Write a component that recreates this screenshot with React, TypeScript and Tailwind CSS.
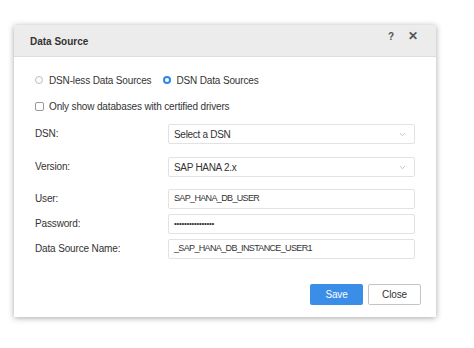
import { ChevronDown } from 'lucide-react';

const font = { fontFamily: '"Liberation Sans", Arial, sans-serif' };

function SelectBox({ value }: { value: string }) {
    return (
        <div className="flex items-center justify-between h-[20px] w-[247px] border border-[#e2e2e2] rounded-[2px] bg-white pl-[5px] pr-[7px] text-[10px] tracking-[-0.3px] text-[#333]">
            <span>{value}</span>
            <ChevronDown size={9} strokeWidth={1.5} className="text-[#999]" />
        </div>
    );
}

function TextBox({ value, dots }: { value: string; dots?: boolean }) {
    return (
        <div className="flex items-center h-[20px] w-[247px] border border-[#e2e2e2] rounded-[2px] bg-white pl-[5px] text-[#333]">
            <span className={dots ? 'text-[8px] tracking-[-0.3px]' : 'text-[9px] tracking-[-0.65px]'}>{value}</span>
        </div>
    );
}

export default function App() {
    const rows: { label: string; kind: 'select' | 'text'; value: string; gap: string; dots?: boolean }[] = [
        { label: 'DSN:', kind: 'select', value: 'Select a DSN', gap: 'mt-0' },
        { label: 'Version:', kind: 'select', value: 'SAP HANA 2.x', gap: 'mt-[13px]' },
        { label: 'User:', kind: 'text', value: 'SAP_HANA_DB_USER', gap: 'mt-[12px]' },
        { label: 'Password:', kind: 'text', value: '••••••••••••••••', gap: 'mt-[5px]', dots: true },
        { label: 'Data Source Name:', kind: 'text', value: '_SAP_HANA_DB_INSTANCE_USER1', gap: 'mt-[5px]' },
    ];

    return (
        <div className="w-[474px] h-[348px] bg-white pt-[25px] pl-[14px]" style={font}>
            <div className="w-[422px] h-[292px] bg-white shadow-[0_1px_6px_rgba(0,0,0,0.35)] flex flex-col">
                <div className="h-[32px] bg-[#ececec] border-b border-[#dedede] flex items-center justify-between pl-[16px] pr-[18px]">
                    <span className="text-[10px] font-bold text-[#333] mt-[2px]">Data Source</span>
                    <div className="flex items-center gap-[14px] text-[#555] -mt-[9px]">
                        <span className="text-[10px] font-bold">?</span>
                        <span className="text-[12px] font-bold">✕</span>
                    </div>
                </div>

                <div className="flex flex-col pl-[21px] pr-[21px] text-[10px] tracking-[-0.15px] text-[#333]">
                    <div className="flex items-center mt-[16px] h-[14px]">
                        <span className="w-[8px] h-[8px] rounded-full border border-[#bbb] mr-[6px]" />
                        <span>DSN-less Data Sources</span>
                        <span className="w-[8px] h-[8px] rounded-full border-[2.5px] border-[#2f86e6] ml-[12px] mr-[5px]" />
                        <span>DSN Data Sources</span>
                    </div>
                    <div className="flex items-center mt-[12px] h-[14px]">
                        <span className="w-[9px] h-[9px] rounded-[2px] border border-[#999] mr-[5px]" />
                        <span>Only show databases with certified drivers</span>
                    </div>

                    <div className="flex flex-col mt-[11px]">
                        {rows.map((r) => (
                            <div key={r.label} className={`flex items-center ${r.gap}`}>
                                <span className="w-[133px] -mt-[2px]">{r.label}</span>
                                {r.kind === 'select' ? <SelectBox value={r.value} /> : <TextBox value={r.value} dots={r.dots} />}
                            </div>
                        ))}
                    </div>

                    <div className="flex justify-end gap-[5px] mt-[25px] mr-[-6px]">
                        <button className="w-[53px] h-[21px] bg-[#3a8ee8] text-white text-[10px] rounded-[2px]">Save</button>
                        <button className="w-[53px] h-[21px] bg-white border border-[#c4c4c4] text-[#333] text-[10px] rounded-[2px]">Close</button>
                    </div>
                </div>
            </div>
        </div>
    );
}
